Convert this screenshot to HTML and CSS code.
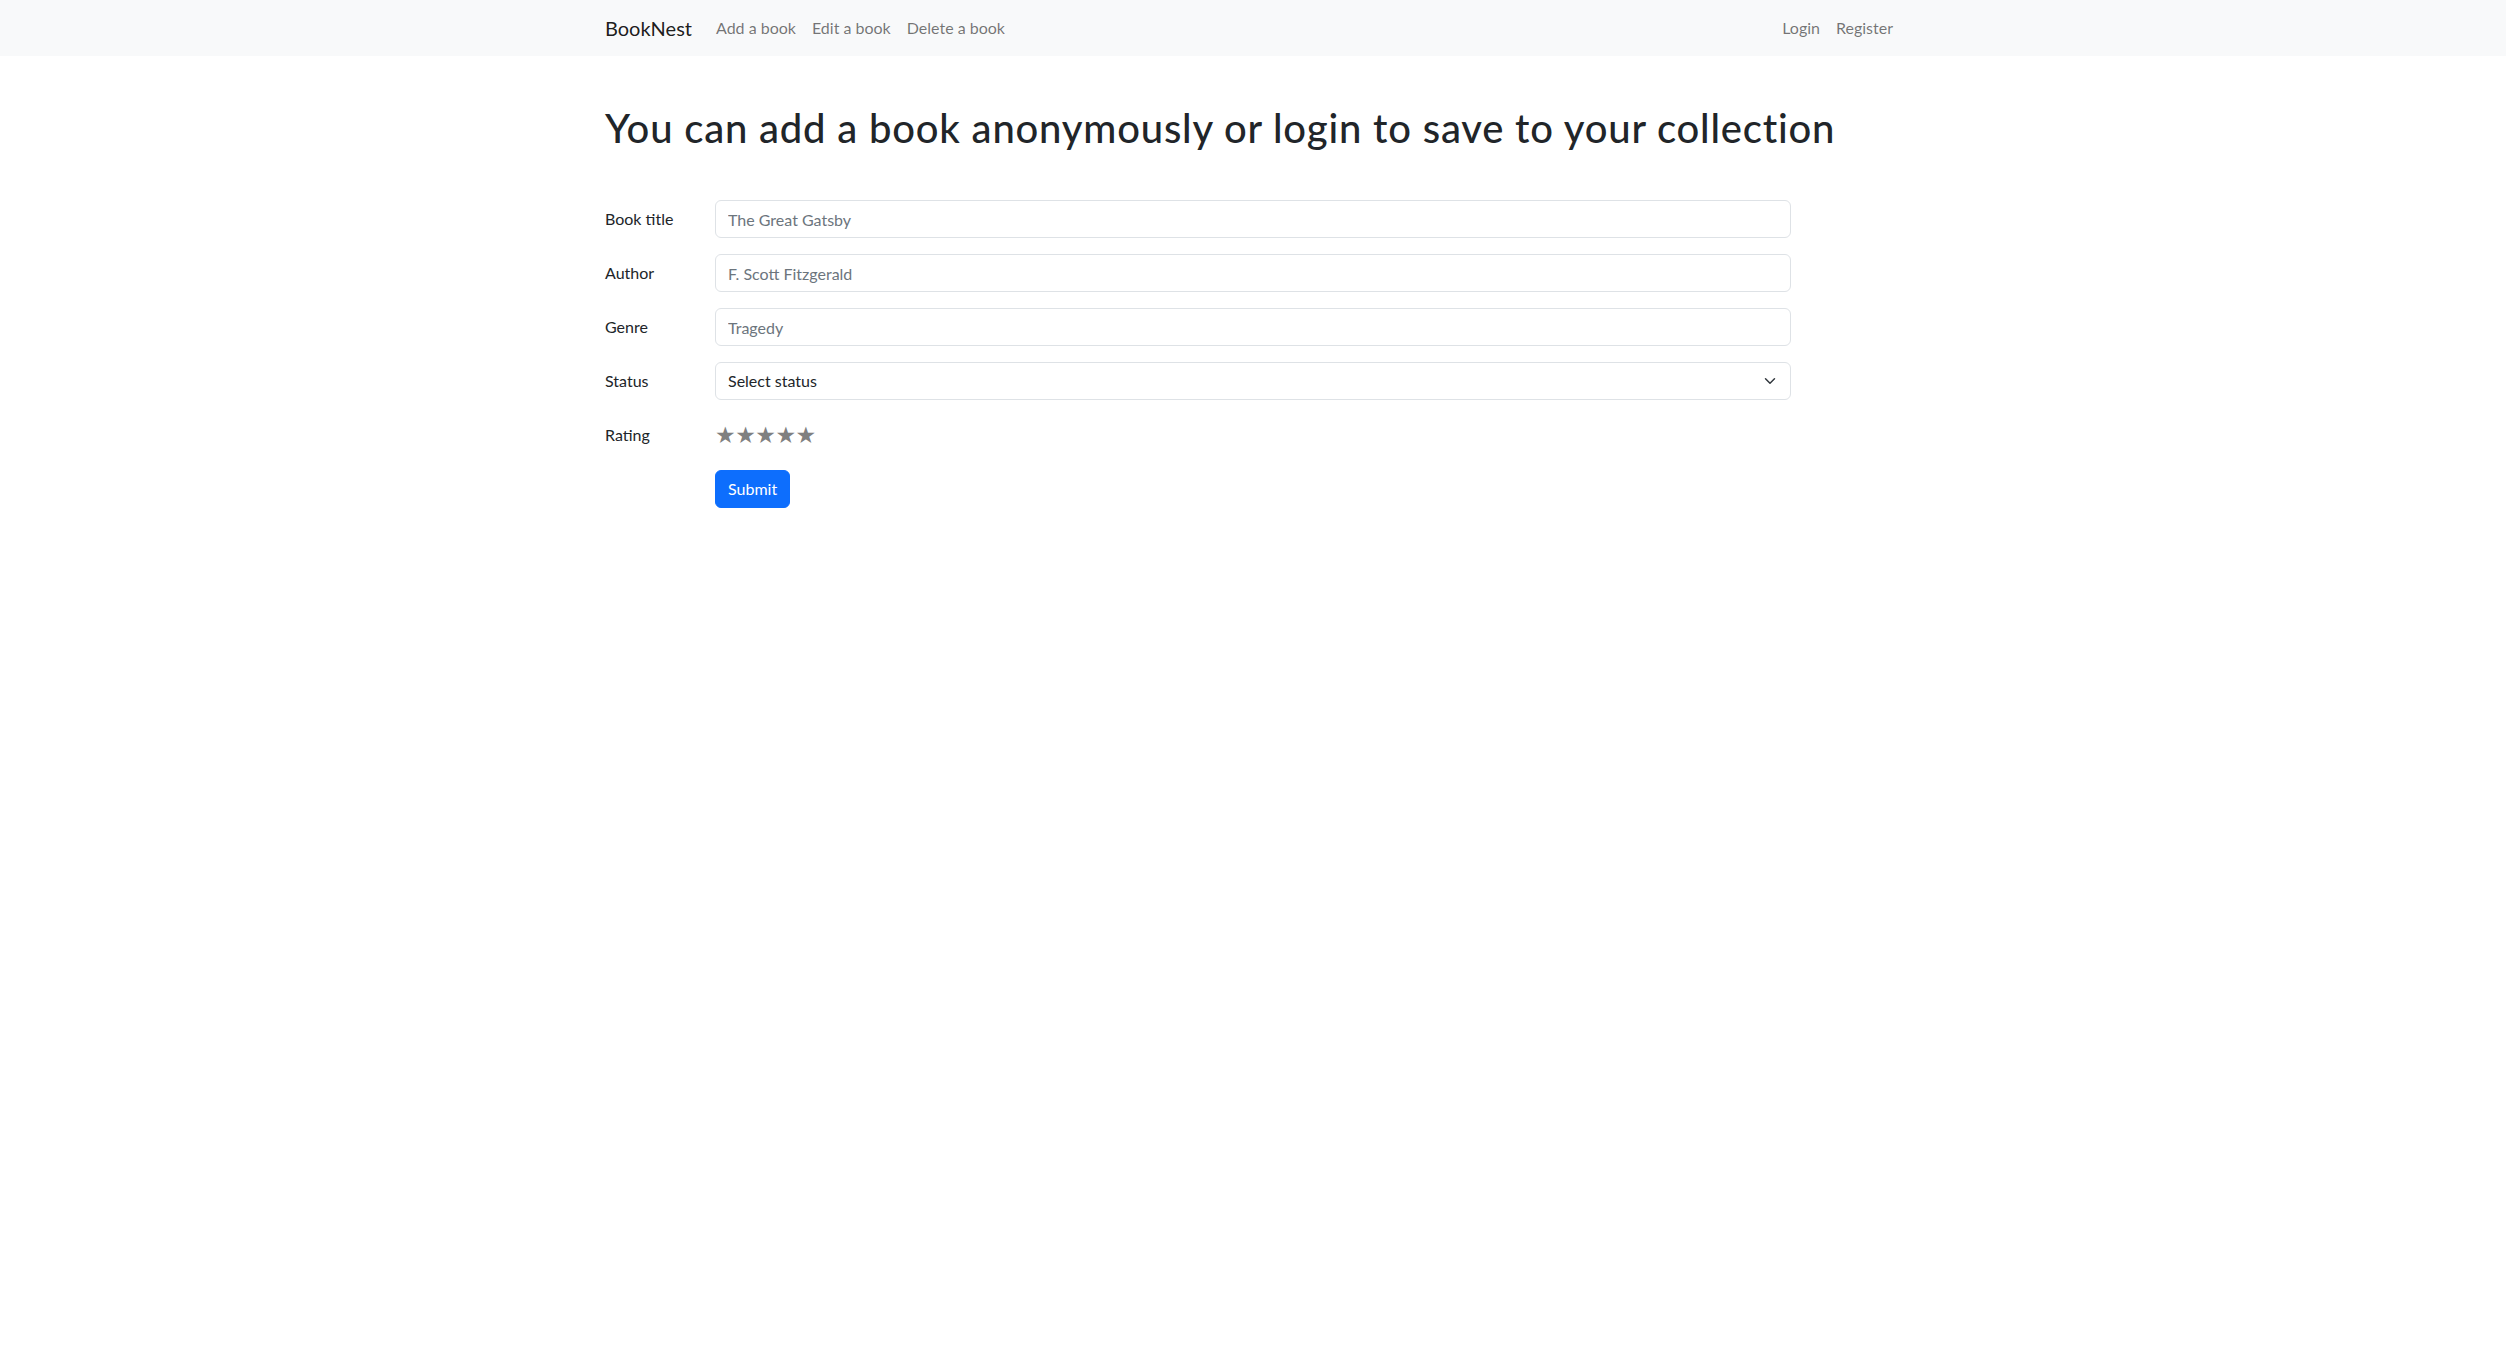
FILE: index.html
```html
<!DOCTYPE html>
<html lang="en">
<head>
    <meta charset="UTF-8">
    <meta name="viewport" content="width=device-width, initial-scale=1.0">
    <title>BookNest</title>
    <link rel="stylesheet" href="styles.css">
</head>
<body>
    <nav class="navbar">
        <div class="container nav-inner">
            <a class="brand" href="#">BookNest</a>
            <ul class="nav-links">
                <li><a href="#">Add a book</a></li>
                <li><a href="#">Edit a book</a></li>
                <li><a href="#">Delete a book</a></li>
            </ul>
            <ul class="nav-links nav-right">
                <li><a href="#">Login</a></li>
                <li><a href="#">Register</a></li>
            </ul>
        </div>
    </nav>

    <main class="container">
        <h1 class="page-title">You can add a book anonymously or login to save to your collection</h1>

        <form class="book-form" onsubmit="return false;">
            <div class="form-row">
                <label class="form-label" for="title">Book title</label>
                <div class="form-field">
                    <input type="text" id="title" class="form-control" placeholder="The Great Gatsby">
                </div>
            </div>
            <div class="form-row">
                <label class="form-label" for="author">Author</label>
                <div class="form-field">
                    <input type="text" id="author" class="form-control" placeholder="F. Scott Fitzgerald">
                </div>
            </div>
            <div class="form-row">
                <label class="form-label" for="genre">Genre</label>
                <div class="form-field">
                    <input type="text" id="genre" class="form-control" placeholder="Tragedy">
                </div>
            </div>
            <div class="form-row">
                <label class="form-label" for="status">Status</label>
                <div class="form-field">
                    <select id="status" class="form-select">
                        <option selected>Select status</option>
                        <option>Want to read</option>
                        <option>Reading</option>
                        <option>Finished</option>
                    </select>
                </div>
            </div>
            <div class="form-row">
                <span class="form-label">Rating</span>
                <div class="form-field">
                    <div class="rating">
                        <span class="star">&#9733;</span><span class="star">&#9733;</span><span class="star">&#9733;</span><span class="star">&#9733;</span><span class="star">&#9733;</span>
                    </div>
                </div>
            </div>
            <div class="form-row">
                <span class="form-label"></span>
                <div class="form-field">
                    <button type="submit" class="btn-submit">Submit</button>
                </div>
            </div>
        </form>
    </main>
</body>
</html>
```

FILE: styles.css
```css
* {
    box-sizing: border-box;
}

body {
    margin: 0;
    font-family: Lato, 'Open Sans', sans-serif;
    font-size: 16px;
    line-height: 1.5;
    color: #212529;
    background-color: #fff;
}

.container {
    width: 1320px;
    margin: 0 auto;
    padding: 0 12px;
}

/* navbar */
.navbar {
    background-color: #f8f9fa;
    padding: 8px 0;
}

.nav-inner {
    display: flex;
    align-items: center;
}

.brand {
    font-size: 20px;
    line-height: 30px;
    padding: 5px 0;
    margin-right: 16px;
    color: rgba(0, 0, 0, 0.9);
    text-decoration: none;
}

.nav-links {
    display: flex;
    list-style: none;
    margin: 0;
    padding: 0;
}

.nav-links a {
    display: block;
    padding: 8px;
    color: rgba(0, 0, 0, 0.55);
    text-decoration: none;
}

.nav-right {
    margin-left: auto;
}

/* heading */
.page-title {
    font-size: 40px;
    font-weight: 500;
    line-height: 1.2;
    letter-spacing: 0.8px;
    margin: 48px 0;
}

/* form */
.form-row {
    display: flex;
    margin: 0 -12px 16px;
}

.form-label {
    width: 110px;
    padding: 7px 12px;
}

.form-field {
    width: 1100px;
    padding: 0 12px;
}

.form-control,
.form-select {
    display: block;
    width: 100%;
    height: 38px;
    padding: 6px 12px;
    font-family: inherit;
    font-size: 16px;
    line-height: 1.5;
    color: #212529;
    background-color: #fff;
    border: 1px solid #dee2e6;
    border-radius: 6px;
}

.form-control::placeholder {
    color: #6c757d;
}

.form-select {
    appearance: none;
    padding-right: 36px;
    background-image: url("data:image/svg+xml,%3csvg xmlns='http://www.w3.org/2000/svg' viewBox='0 0 16 16'%3e%3cpath fill='none' stroke='%23343a40' stroke-linecap='round' stroke-linejoin='round' stroke-width='2' d='m2 5 6 6 6-6'/%3e%3c/svg%3e");
    background-repeat: no-repeat;
    background-position: right 12px center;
    background-size: 16px 12px;
}

.rating {
    height: 38px;
    display: flex;
    align-items: center;
}

.star {
    font-family: 'DejaVu Sans', sans-serif;
    font-size: 23px;
    line-height: 1;
    letter-spacing: -0.5px;
    color: #808080;
}

.btn-submit {
    height: 38px;
    padding: 6px 12px;
    font-family: inherit;
    font-size: 16px;
    line-height: 1.5;
    color: #fff;
    background-color: #0d6efd;
    border: 1px solid #0d6efd;
    border-radius: 6px;
    cursor: pointer;
}

.btn-submit:hover {
    background-color: #0b5ed7;
}
```
